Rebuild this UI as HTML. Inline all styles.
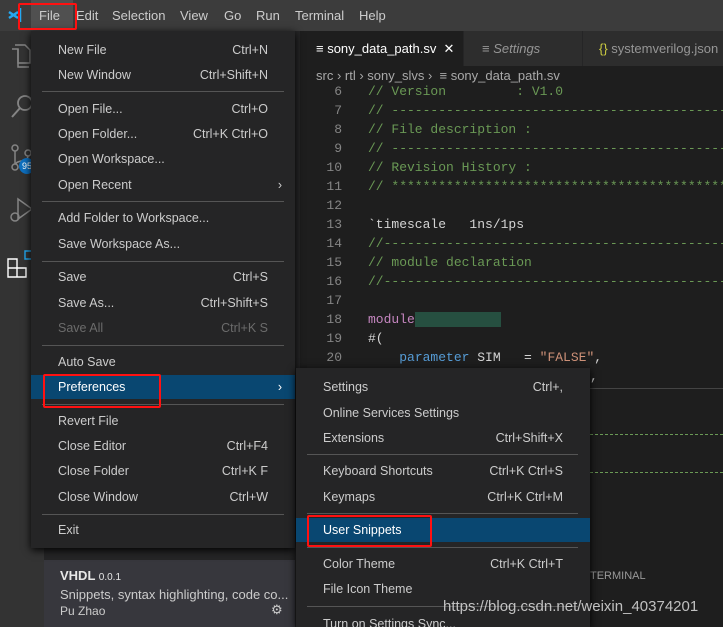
<!DOCTYPE html><html><head><style>
*{margin:0;padding:0;box-sizing:border-box}
html,body{width:723px;height:627px;overflow:hidden}
body{background:#1e1e1e;font-family:"Liberation Sans",sans-serif;font-size:13px;color:#ccc;position:relative}
.a{position:absolute}
.tb{left:0;top:0;width:723px;height:31px;background:#3c3c3c}
.tb span{position:absolute;top:8px;font-size:13px;color:#ccc}
.act{left:0;top:31px;width:44px;height:596px;background:#333}
.menu{background:#252526;box-shadow:0 2px 8px #000;overflow:hidden}
.it{position:absolute;left:0;right:0;height:24px;line-height:24px;font-size:12.5px}
.it .l{position:absolute;left:27px}
.it .r{position:absolute;right:27px}
.it .c{position:absolute;right:13px}
.sep{position:absolute;height:1px;background:#555}
.code{font-family:"Liberation Mono",monospace;font-size:13px;white-space:pre}
.ln{position:absolute;width:342px;left:0;text-align:right;color:#858585}
.cl{position:absolute;left:368px}
.g{color:#6a9955}
.red{position:absolute;border:2px solid #f11;border-radius:2px}
</style></head><body>
<div class="a tb">
<svg class="a" style="left:6px;top:6px" width="18" height="18"><path d="M3 6l9 6M3 12l9-6M14 2v14" stroke="#23a9f2" stroke-width="2.5" fill="none"/></svg>
<div class="a" style="left:31px;top:0;width:42px;height:30px;background:#505050"></div>
<span style="left:39px">File</span><span style="left:76px">Edit</span><span style="left:112px">Selection</span><span style="left:180px">View</span><span style="left:224px">Go</span><span style="left:256px">Run</span><span style="left:295px">Terminal</span><span style="left:359px">Help</span>
</div>
<div class="a act">
<svg class="a" style="left:8px;top:10px" width="28" height="28"><path d="M7 4h10l5 5v13H10V8" stroke="#858585" stroke-width="1.5" fill="none"/><path d="M4 8h6v18h11" stroke="#858585" stroke-width="1.5" fill="none"/></svg>
<svg class="a" style="left:8px;top:62px" width="28" height="28"><circle cx="17" cy="10" r="7" stroke="#858585" stroke-width="1.8" fill="none"/><path d="M12 15L4 24" stroke="#858585" stroke-width="2"/></svg>
<svg class="a" style="left:8px;top:112px" width="28" height="30"><circle cx="7" cy="5" r="3" stroke="#858585" fill="none" stroke-width="1.5"/><circle cx="7" cy="24" r="3" stroke="#858585" fill="none" stroke-width="1.5"/><circle cx="20" cy="10" r="3" stroke="#858585" fill="none" stroke-width="1.5"/><path d="M7 8v13M20 13c0 6-12 4-12 8" stroke="#858585" fill="none" stroke-width="1.5"/></svg>
<div class="a" style="left:19px;top:127px;width:16px;height:16px;border-radius:8px;background:#0e70c0;color:#fff;font-size:9px;line-height:16px;text-align:center">95</div>
<svg class="a" style="left:6px;top:164px" width="30" height="30"><path d="M12 4l14 10-14 10z" stroke="#858585" fill="none" stroke-width="1.5"/><circle cx="9" cy="22" r="4" stroke="#858585" fill="none" stroke-width="1.5"/></svg>
<svg class="a" style="left:6px;top:218px" width="30" height="30"><path d="M2 10h9v9h9v9H2zM2 19h9v9M11 19v9" stroke="#fff" fill="none" stroke-width="1.4"/><path d="M19 2h8v8h-8z" stroke="#23a9f2" fill="none" stroke-width="1.4"/></svg>
</div>
<div class="a" style="left:44px;top:31px;width:256px;height:596px;background:#252526"></div>
<div class="a" style="left:44px;top:560px;width:251px;height:67px;background:#37373d"></div>
<div class="a" style="left:60px;top:568px;font-weight:bold;color:#e7e7e7">VHDL <span style="font-weight:normal;font-size:10px">0.0.1</span></div>
<div class="a" style="left:60px;top:587px;color:#ccc;font-size:13px">Snippets, syntax highlighting, code co...</div>
<div class="a" style="left:60px;top:604px;color:#ccc;font-size:12px">Pu Zhao</div>
<div class="a" style="left:271px;top:602px;color:#ccc;font-size:13px">⚙</div>
<div class="a" style="left:300px;top:31px;width:423px;height:35px;background:#252526"></div>
<div class="a" style="left:300px;top:31px;width:163px;height:35px;background:#1e1e1e;color:#fff;line-height:35px;padding-left:16px">≡ sony_data_path.sv &nbsp;✕</div>
<div class="a" style="left:464px;top:31px;width:118px;height:35px;background:#2d2d2d;color:#969696;line-height:35px;padding-left:18px;font-style:italic">≡ Settings</div>
<div class="a" style="left:583px;top:31px;width:140px;height:35px;background:#2d2d2d;color:#969696;line-height:35px;padding-left:16px;white-space:nowrap"><span style="color:#cbcb41">{}</span> systemverilog.json</div>
<div class="a" style="left:316px;top:68px;color:#a9a9a9;white-space:nowrap">src › rtl › sony_slvs › &nbsp;≡ sony_data_path.sv</div>
<div class="code">
<div class="ln" style="top:84px">6</div><div class="cl g" style="top:84px">// Version         : V1.0</div>
<div class="ln" style="top:103px">7</div><div class="cl g" style="top:103px">// -------------------------------------------</div>
<div class="ln" style="top:122px">8</div><div class="cl g" style="top:122px">// File description :</div>
<div class="ln" style="top:141px">9</div><div class="cl g" style="top:141px">// -------------------------------------------</div>
<div class="ln" style="top:160px">10</div><div class="cl g" style="top:160px">// Revision History :</div>
<div class="ln" style="top:179px">11</div><div class="cl g" style="top:179px">// ********************************************</div>
<div class="ln" style="top:198px">12</div>
<div class="ln" style="top:217px">13</div><div class="cl" style="top:217px;color:#d4d4d4">`timescale   1ns/1ps</div>
<div class="ln" style="top:236px">14</div><div class="cl g" style="top:236px">//--------------------------------------------</div>
<div class="ln" style="top:255px">15</div><div class="cl g" style="top:255px">// module declaration</div>
<div class="ln" style="top:274px">16</div><div class="cl g" style="top:274px">//--------------------------------------------</div>
<div class="ln" style="top:293px">17</div>
<div class="ln" style="top:312px">18</div><div class="cl" style="top:312px;color:#c586c0">module<span style="background:#264f40;color:transparent">  xxxxxxxxx</span></div>
<div class="ln" style="top:331px">19</div><div class="cl" style="top:331px;color:#d4d4d4">#(</div>
<div class="ln" style="top:350px">20</div><div class="cl" style="top:350px;color:#d4d4d4">    <span style="color:#569cd6">parameter</span> SIM   = <span style="color:#ce9178">"FALSE"</span>,</div>
<div class="cl" style="top:369px;left:590px;color:#d4d4d4">,</div>
</div>
<div class="a" style="left:590px;top:388px;width:133px;height:1px;background:#444"></div>
<div class="a" style="left:590px;top:434px;width:133px;border-top:1px dashed #6a9955"></div>
<div class="a" style="left:590px;top:472px;width:133px;border-top:1px dashed #6a9955"></div>
<div class="a" style="left:590px;top:570px;color:#999;font-size:11px">TERMINAL</div>
<div class="a menu" style="left:31px;top:31px;width:264px;height:517px">
<div class="it" style="top:7px"><span class="l">New File</span><span class="r">Ctrl+N</span></div>
<div class="it" style="top:32px"><span class="l">New Window</span><span class="r">Ctrl+Shift+N</span></div>
<div class="sep" style="top:60px;left:11px;right:11px"></div>
<div class="it" style="top:66px"><span class="l">Open File...</span><span class="r">Ctrl+O</span></div>
<div class="it" style="top:91px"><span class="l">Open Folder...</span><span class="r">Ctrl+K Ctrl+O</span></div>
<div class="it" style="top:116px"><span class="l">Open Workspace...</span></div>
<div class="it" style="top:142px"><span class="l">Open Recent</span><span class="c">›</span></div>
<div class="sep" style="top:170px;left:11px;right:11px"></div>
<div class="it" style="top:175px"><span class="l">Add Folder to Workspace...</span></div>
<div class="it" style="top:201px"><span class="l">Save Workspace As...</span></div>
<div class="sep" style="top:230px;left:11px;right:11px"></div>
<div class="it" style="top:234px"><span class="l">Save</span><span class="r">Ctrl+S</span></div>
<div class="it" style="top:260px"><span class="l">Save As...</span><span class="r">Ctrl+Shift+S</span></div>
<div class="it" style="top:285px;color:#6b6b6b"><span class="l">Save All</span><span class="r">Ctrl+K S</span></div>
<div class="sep" style="top:314px;left:11px;right:11px"></div>
<div class="it" style="top:319px"><span class="l">Auto Save</span></div>
<div class="it" style="top:344px;background:#094771;color:#fff"><span class="l">Preferences</span><span class="c">›</span></div>
<div class="sep" style="top:373px;left:11px;right:11px"></div>
<div class="it" style="top:378px"><span class="l">Revert File</span></div>
<div class="it" style="top:403px"><span class="l">Close Editor</span><span class="r">Ctrl+F4</span></div>
<div class="it" style="top:428px"><span class="l">Close Folder</span><span class="r">Ctrl+K F</span></div>
<div class="it" style="top:454px"><span class="l">Close Window</span><span class="r">Ctrl+W</span></div>
<div class="sep" style="top:483px;left:11px;right:11px"></div>
<div class="it" style="top:487px"><span class="l">Exit</span></div>
</div>
<div class="a menu" style="left:296px;top:368px;width:294px;height:259px">
<div class="it" style="top:7px"><span class="l">Settings</span><span class="r">Ctrl+,</span></div>
<div class="it" style="top:33px"><span class="l">Online Services Settings</span></div>
<div class="it" style="top:58px"><span class="l">Extensions</span><span class="r">Ctrl+Shift+X</span></div>
<div class="sep" style="top:86px;left:11px;right:12px"></div>
<div class="it" style="top:91px"><span class="l">Keyboard Shortcuts</span><span class="r">Ctrl+K Ctrl+S</span></div>
<div class="it" style="top:117px"><span class="l">Keymaps</span><span class="r">Ctrl+K Ctrl+M</span></div>
<div class="sep" style="top:145px;left:11px;right:12px"></div>
<div class="it" style="top:150px;background:#094771;color:#fff"><span class="l">User Snippets</span></div>
<div class="sep" style="top:179px;left:11px;right:12px"></div>
<div class="it" style="top:184px"><span class="l">Color Theme</span><span class="r">Ctrl+K Ctrl+T</span></div>
<div class="it" style="top:209px"><span class="l">File Icon Theme</span></div>
<div class="sep" style="top:238px;left:11px;right:12px"></div>
<div class="it" style="top:244px"><span class="l">Turn on Settings Sync...</span></div>
</div>
<div class="a" style="left:443px;top:598px;color:#ddd;font-size:15px;opacity:.85;white-space:nowrap">https://blog.csdn.net/weixin_40374201</div>
<div class="red" style="left:18px;top:3px;width:59px;height:27px"></div>
<div class="red" style="left:43px;top:374px;width:118px;height:34px"></div>
<div class="red" style="left:307px;top:515px;width:125px;height:32px"></div>
</body></html>
